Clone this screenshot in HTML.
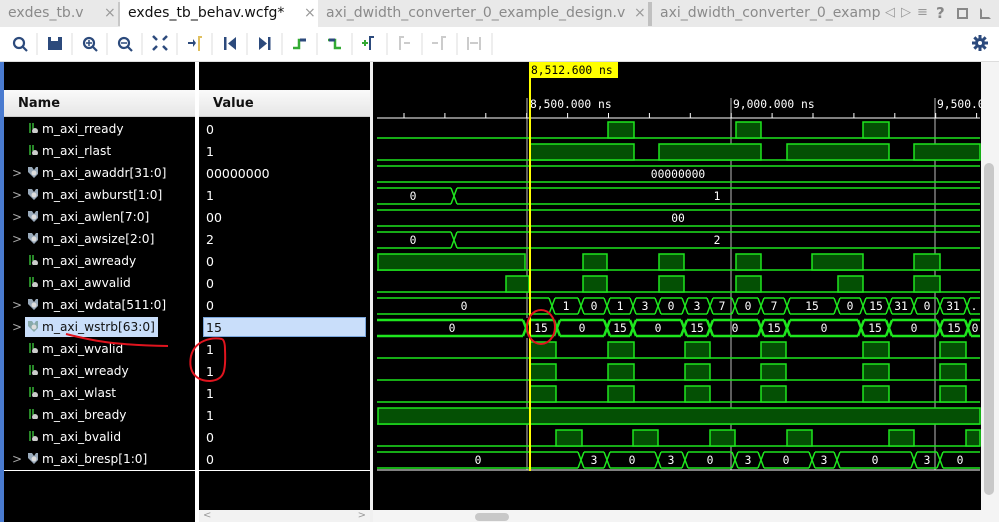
<!DOCTYPE html>
<html><head><meta charset="utf-8"><style>
*{margin:0;padding:0;box-sizing:border-box}
body{width:999px;height:522px;overflow:hidden;background:#fff;font-family:"DejaVu Sans","Liberation Sans",sans-serif;position:relative}
.abs{position:absolute}
.tab{position:absolute;top:0;height:27px;font-size:14px;line-height:27px;color:#8a8a8a;padding-left:8px;white-space:nowrap;overflow:hidden}
.nm{position:absolute;left:42px;font-size:12.2px;color:#fff;white-space:nowrap}
.vl{position:absolute;left:206px;font-size:12.5px;color:#fff}
.ar{position:absolute;left:12px;color:#aaa;font-size:12px}
.ic{position:absolute;left:28px;width:10px;height:11px}
</style></head><body>
<div class="abs" style="left:0;top:0;width:999px;height:27px;background:#e9e9e9"></div>
<div class="tab" style="left:0;width:118px">exdes_tb.v<span style="position:absolute;left:104px;color:#999">×</span></div>
<div class="abs" style="left:118px;top:2px;width:2px;height:24px;background:#c8c8c8"></div>
<div class="tab" style="left:120px;width:198px;background:#fff;color:#111">exdes_tb_behav.wcfg*<span style="position:absolute;left:184px;color:#999">×</span></div>
<div class="tab" style="left:318px;width:330px">axi_dwidth_converter_0_example_design.v<span style="position:absolute;left:316px;background:#e9e9e9;color:#999">×</span></div>
<div class="abs" style="left:648px;top:2px;width:4px;height:24px;background:#c0c0c0"></div>
<div class="tab" style="left:652px;width:228px">axi_dwidth_converter_0_example</div>
<div class="abs" style="left:885px;top:5px;font-size:13px;color:#999;letter-spacing:6px">◁▷≡</div>
<div class="abs" style="left:936px;top:4px;font-size:15px;color:#888;font-weight:bold">?</div>
<div class="abs" style="left:957px;top:8px;width:11px;height:11px;border:2px solid #888"></div>
<div class="abs" style="left:980px;top:8px;width:11px;height:11px;border:2px solid #888;border-top-color:transparent;border-right-color:transparent"></div>
<div class="abs" style="left:0;top:27px;width:999px;height:34px;background:#fff"></div>
<svg class="abs" style="left:0;top:27px" width="999" height="34">
<g stroke="#ddd"><line x1="37" y1="6" x2="37" y2="28"/><line x1="72" y1="6" x2="72" y2="28"/><line x1="107" y1="6" x2="107" y2="28"/><line x1="142" y1="6" x2="142" y2="28"/><line x1="177" y1="6" x2="177" y2="28"/><line x1="212" y1="6" x2="212" y2="28"/><line x1="247" y1="6" x2="247" y2="28"/><line x1="282" y1="6" x2="282" y2="28"/><line x1="317" y1="6" x2="317" y2="28"/><line x1="352" y1="6" x2="352" y2="28"/><line x1="387" y1="6" x2="387" y2="28"/><line x1="422" y1="6" x2="422" y2="28"/><line x1="457" y1="6" x2="457" y2="28"/><line x1="492" y1="6" x2="492" y2="28"/></g>
<g fill="none" stroke="#2c4a7c" stroke-width="2.2"><circle cx="19" cy="16" r="5"/><line x1="23" y1="20" x2="27" y2="24"/><circle cx="89" cy="16" r="5"/><line x1="93" y1="20" x2="97" y2="24"/><circle cx="124" cy="16" r="5"/><line x1="128" y1="20" x2="132" y2="24"/></g>
<path d="M86 16h6M89 13v6M121 16h6" stroke="#2c4a7c" stroke-width="1.5"/>
<rect x="48" y="10" width="14" height="13" fill="#2c4a7c"/><rect x="51" y="10" width="7" height="4" fill="#fff"/>
<path d="M153 9l4 4M167 9l-4 4M153 23l4-4M167 23l-4-4" stroke="#2c4a7c" stroke-width="2.5"/>
<path d="M188 15h5v-3l3 4-3 4v-3h-5z" fill="#2c4a7c"/><path d="M198 9h4v2h-2v13h-2z" fill="#e0c060"/>
<rect x="224" y="10" width="2.5" height="13" fill="#2c4a7c"/><path d="M236 10v13l-8-6.5z" fill="#2c4a7c"/>
<path d="M259 10v13l8-6.5z" fill="#2c4a7c"/><rect x="268" y="10" width="2.5" height="13" fill="#2c4a7c"/>
<path d="M293 21h6v-8h7" stroke="#3a3" stroke-width="2.5" fill="none"/><path d="M300 13h6" stroke="#2c4a7c" stroke-width="3"/>
<path d="M328 13h7v8h6" stroke="#3a3" stroke-width="2.5" fill="none"/><path d="M329 13h6" stroke="#2c4a7c" stroke-width="3"/>
<path d="M362 16h6M365 13v6" stroke="#3a3" stroke-width="2"/><path d="M370 23V10h4" stroke="#2c4a7c" stroke-width="2" fill="none"/>
<g stroke="#ccc" stroke-width="2" fill="none"><path d="M400 23V10h4M404 16h6M432 16h6M442 23V10h4M468 10v13M480 10v13M470 16h8"/></g>
<g transform="translate(980,16)" fill="#2c4a7c"><circle r="5"/><rect x="-1.5" y="-8" width="3" height="16"/><rect x="-8" y="-1.5" width="16" height="3"/><rect x="-1.5" y="-8" width="3" height="16" transform="rotate(45)"/><rect x="-1.5" y="-8" width="3" height="16" transform="rotate(-45)"/><circle r="2" fill="#fff"/></g>
</svg>
<div class="abs" style="left:0;top:61px;width:999px;height:1px;background:#ddd"></div>
<div class="abs" style="left:0;top:62px;width:4px;height:460px;background:#4a7bd0"></div>
<div class="abs" style="left:4px;top:62px;width:191px;height:460px;background:#000"></div>
<div class="abs" style="left:195px;top:62px;width:4px;height:460px;background:#fff"></div>
<div class="abs" style="left:199px;top:62px;width:171px;height:448px;background:#000"></div>
<div class="abs" style="left:199px;top:510px;width:171px;height:12px;background:#f2f2f2;color:#999;font-size:10px;line-height:12px;padding-left:4px">&lt;<span style="float:right;margin-right:4px">&gt;</span></div>
<div class="abs" style="left:370px;top:62px;width:3px;height:460px;background:#f0f0f0"></div>
<div class="abs" style="left:4px;top:90px;width:191px;height:27px;background:linear-gradient(#fafafa,#e6e6e6);border-bottom:1px solid #ccc;font-size:13px;font-weight:bold;line-height:27px;padding-left:14px;color:#111">Name</div>
<div class="abs" style="left:199px;top:90px;width:171px;height:27px;background:linear-gradient(#fafafa,#e6e6e6);border-bottom:1px solid #ccc;font-size:13px;font-weight:bold;line-height:27px;padding-left:14px;color:#111">Value</div>
<div class="abs" style="left:25px;top:317px;width:133px;height:20px;background:#c9defa"></div>
<div class="abs" style="left:203px;top:317px;width:163px;height:20px;background:#c9defa;border:1px solid #7aa6dc"></div>
<div class="abs" style="left:4px;top:470px;width:366px;height:1px;background:#fff"></div>
<div id="names"></div>
<svg class="abs" style="left:373px;top:62px" width="608" height="448" viewBox="373 62 608 448">
<rect x="373" y="62" width="608" height="448" fill="#000"/>
<g stroke="#bbb" stroke-width="1"><line x1="527" y1="98" x2="527" y2="470"/><line x1="731" y1="98" x2="731" y2="470"/><line x1="935" y1="98" x2="935" y2="470"/></g>
<line x1="377" y1="118" x2="980" y2="118" stroke="#fff"/>
<g stroke="#fff" id="ticks"></g>
<g fill="#fff" font-family="DejaVu Sans Mono,Liberation Mono,monospace" font-size="11.3"><text x="530" y="108">8,500.000 ns</text><text x="733" y="108">9,000.000 ns</text><text x="937" y="108">9,500.0</text></g>
<g id="w"></g>
<line x1="377" y1="470" x2="980" y2="470" stroke="#fff"/>
<rect x="529" y="62" width="2" height="409" fill="#ffff00"/>
<rect x="530" y="62" width="88" height="16" fill="#ffff00"/>
<text x="531" y="74" font-family="DejaVu Sans Mono,Liberation Mono,monospace" font-size="11.3" fill="#000">8,512.600 ns</text>
</svg>
<div class="abs" style="left:981px;top:62px;width:18px;height:448px;background:#f4f4f4"></div>
<div class="abs" style="left:984px;top:163px;width:10px;height:332px;background:#c8c8c8;border-radius:5px"></div>
<div class="abs" style="left:373px;top:510px;width:626px;height:12px;background:#f4f4f4"></div>
<div class="abs" style="left:475px;top:513px;width:34px;height:8px;background:#c8c8c8;border-radius:4px"></div>
<svg class="abs" style="left:0;top:0" width="999" height="522" fill="none" stroke="#e0141e" stroke-width="2">
<ellipse cx="541" cy="327" rx="14" ry="17"/>
<path d="M66 334C90 340 110 345 168 346"/>
<path d="M222 339C212 337 195 340 191 356C188 372 196 381 210 381C224 380 226 372 225 350C225 343 224 340 222 339"/>
</svg>
<script>
const rows=[["m_axi_rready","0",0],["m_axi_rlast","1",0],["m_axi_awaddr[31:0]","00000000",1],["m_axi_awburst[1:0]","1",1],["m_axi_awlen[7:0]","00",1],["m_axi_awsize[2:0]","2",1],["m_axi_awready","0",0],["m_axi_awvalid","0",0],["m_axi_wdata[511:0]","0",1],["m_axi_wstrb[63:0]","15",1],["m_axi_wvalid","1",0],["m_axi_wready","1",0],["m_axi_wlast","1",0],["m_axi_bready","1",0],["m_axi_bvalid","0",0],["m_axi_bresp[1:0]","0",1]];
let h="";rows.forEach((r,i)=>{const c=129+22*i;const sel=i==9;
h+=`<div class="nm" style="top:${c-7}px;${sel?'color:#111':''}">${r[0]}</div><div class="vl" style="top:${c-7}px;${sel?'color:#111':''}">${r[1]}</div>`;
if(r[2])h+=`<div class="ar" style="top:${c-7}px">&gt;</div><svg class="ic" style="top:${c-6}px" width="12" height="11"><path d="M0 0h4l2 3 2-3h4v5l-6 6-6-6z" fill="${sel?'#8aa':'#9ab'}"/><circle cx="6" cy="6" r="2.5" fill="#ddd"/></svg>`;
else h+=`<svg class="ic" style="top:${c-7}px" width="12" height="13"><path d="M2 1v10M5 1v6" stroke="#3a3" stroke-width="1.6"/><circle cx="7" cy="9" r="3" fill="#ccc"/></svg>`;});
document.getElementById("names").innerHTML=h;
let t="";for(let x=404;x<980;x+=40.9)t+=`<line x1="${x.toFixed(1)}" y1="113" x2="${x.toFixed(1)}" y2="118"/>`;document.getElementById("ticks").innerHTML=t;
const G="#1ee61e",F="#045004";let s="";
function bit(i,p){const c=129+22*i;s+=`<line x1="377" y1="${c+9}" x2="980" y2="${c+9}" stroke="${G}" stroke-width="1.5"/>`;p.forEach(q=>{s+=`<rect x="${q[0]}" y="${c-7}" width="${q[1]-q[0]}" height="16" fill="${F}" stroke="${G}" stroke-width="1.5"/>`});}
function bus(i,tr,lab,w){w=w||1.5;const c=129+22*i;s+=`<line x1="377" y1="${c-7}" x2="980" y2="${c-7}" stroke="${G}" stroke-width="${w}"/><line x1="377" y1="${c+9}" x2="980" y2="${c+9}" stroke="${G}" stroke-width="${w}"/>`;
tr.forEach(x=>{s+=`<rect x="${x-3}" y="${c-9}" width="6" height="20" fill="#000"/><path d="M${x-3} ${c-7}L${x+3} ${c+9}M${x-3} ${c+9}L${x+3} ${c-7}" stroke="${G}" stroke-width="${w}"/>`});
lab.forEach(l=>{s+=`<text x="${l[1]}" y="${c+5}" fill="#fff" font-family="DejaVu Sans Mono,monospace" font-size="11.3" text-anchor="middle">${l[0]}</text>`});}
bit(0,[[608,634],[736,761],[863,889]]);
bit(1,[[530,634],[659,761],[787,889],[914,980]]);
bus(2,[],[["00000000",678]]);
bus(3,[454],[["0",413],["1",717]]);
bus(4,[],[["00",678]]);
bus(5,[454],[["0",413],["2",717]]);
bit(6,[[378,525],[583,607],[659,684],[736,761],[812,863],[914,940]]);
bit(7,[[506,529],[583,607],[659,684],[736,761],[838,863],[914,940]]);
bus(8,[552,581,607,633,658,685,710,735,761,787,837,863,889,914,940,967],[["0",464],["1",566],["0",594],["1",620],["3",645],["0",671],["3",697],["7",722],["0",748],["7",774],["15",812],["0",850],["15",876],["31",901],["0",927],["31",953],[".",974]]);
bus(9,[526,557,607,633,684,710,761,787,861,889,940,968],[["0",452],["15",541],["0",582],["15",620],["0",658],["15",697],["0",735],["15",774],["0",824],["15",875],["0",914],["15",954],["0",975]],2.5);
[10,11,12].forEach(i=>bit(i,[[530,556],[608,634],[685,710],[761,786],[863,889],[940,966]]));
bit(13,[[378,980]]);
bit(14,[[556,582],[633,658],[710,735],[787,812],[889,914],[966,980]]);
bus(15,[581,607,658,685,735,761,812,837,914,940],[["0",478],["3",594],["0",632],["3",671],["0",710],["3",748],["0",786],["3",824],["0",875],["3",927],["0",960]]);
document.getElementById("w").innerHTML=s;
</script>
</body></html>
